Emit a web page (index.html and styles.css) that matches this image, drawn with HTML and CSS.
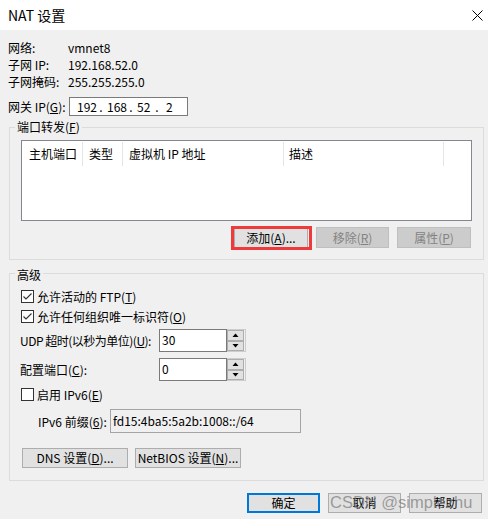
FILE: index.html
```html
<!DOCTYPE html>
<html lang="zh-CN">
<head>
<meta charset="utf-8">
<title>NAT 设置</title>
<link rel="stylesheet" href="styles.css">
</head>
<body>
<div class="titlebar">
  <span class="title">NAT 设置</span>
  <svg class="close" width="11" height="11" viewBox="0 0 11 11"><path d="M0.5 0.5L10.5 10.5M10.5 0.5L0.5 10.5" stroke="#000" stroke-width="1" fill="none"/></svg>
</div>
<div class="main">
  <div class="info-row"><span class="info-label">网络:</span><span>vmnet8</span></div>
  <div class="info-row"><span class="info-label">子网 IP:</span><span>192.168.52.0</span></div>
  <div class="info-row"><span class="info-label">子网掩码:</span><span>255.255.255.0</span></div>
  <div class="gw-row">
    <span class="gw-label">网关 IP(<u>G</u>):</span>
    <div class="ipbox"><span class="oct o1">192</span><span class="dot">.</span><span class="oct o2">168</span><span class="dot">.</span><span class="oct o3">52</span><span class="dot">.</span><span class="oct o4">2</span></div>
  </div>

  <fieldset class="group group-pf">
    <legend>端口转发(<u>F</u>)</legend>
    <div class="listview">
      <div class="lv-header">
        <div class="lv-col c1">主机端口</div>
        <div class="lv-col c2">类型</div>
        <div class="lv-col c3">虚拟机 IP 地址</div>
        <div class="lv-col c4">描述</div>
      </div>
    </div>
    <div class="btn-row">
      <span class="hl"><button class="btn w74">添加(<u>A</u>)...</button></span>
      <button class="btn btn-dis w73">移除(<u>R</u>)</button>
      <button class="btn btn-dis w74">属性(<u>P</u>)</button>
    </div>
  </fieldset>

  <fieldset class="group group-adv">
    <legend>高级</legend>
    <div class="cb-row">
      <svg class="cb" width="13" height="13" viewBox="0 0 13 13"><rect x="0.5" y="0.5" width="12" height="12" fill="#fff" stroke="#333"/><path d="M2.5 6.5L5 9L10.5 3.5" stroke="#333" stroke-width="1.1" fill="none"/></svg>
      <span>允许活动的 FTP(<u>T</u>)</span>
    </div>
    <div class="cb-row">
      <svg class="cb" width="13" height="13" viewBox="0 0 13 13"><rect x="0.5" y="0.5" width="12" height="12" fill="#fff" stroke="#333"/><path d="M2.5 6.5L5 9L10.5 3.5" stroke="#333" stroke-width="1.1" fill="none"/></svg>
      <span>允许任何组织唯一标识符(<u>O</u>)</span>
    </div>
    <div class="field-row">
      <span class="field-label tight">UDP 超时(以秒为单位)(<u>U</u>):</span>
      <div class="spin-input">30</div>
      <div class="spin">
        <div class="spin-btn"><svg width="7" height="4" viewBox="0 0 7 4"><path d="M0.5 4L3.5 0.5L6.5 4Z" fill="#000"/></svg></div>
        <div class="spin-btn"><svg width="7" height="4" viewBox="0 0 7 4"><path d="M0.5 0L3.5 3.5L6.5 0Z" fill="#000"/></svg></div>
      </div>
    </div>
    <div class="field-row row-gap">
      <span class="field-label">配置端口(<u>C</u>):</span>
      <div class="spin-input">0</div>
      <div class="spin">
        <div class="spin-btn"><svg width="7" height="4" viewBox="0 0 7 4"><path d="M0.5 4L3.5 0.5L6.5 4Z" fill="#000"/></svg></div>
        <div class="spin-btn"><svg width="7" height="4" viewBox="0 0 7 4"><path d="M0.5 0L3.5 3.5L6.5 0Z" fill="#000"/></svg></div>
      </div>
    </div>
    <div class="cb-row cb-ipv6">
      <svg class="cb" width="13" height="13" viewBox="0 0 13 13"><rect x="0.5" y="0.5" width="12" height="12" fill="#fff" stroke="#333"/></svg>
      <span>启用 IPv6(<u>E</u>)</span>
    </div>
    <div class="ipv6-row">
      <span class="ipv6-label">IPv6 前缀(<u>6</u>):</span>
      <div class="ipv6-input">fd15:4ba5:5a2b:1008::/64</div>
    </div>
    <div class="dns-row">
      <button class="btn btn-wide">DNS 设置(<u>D</u>)...</button>
      <button class="btn btn-wide">NetBIOS 设置(<u>N</u>)...</button>
    </div>
  </fieldset>

  <div class="footer">
    <button class="btn btn-foot btn-ok">确定</button>
    <button class="btn btn-foot">取消</button>
    <button class="btn btn-foot">帮助</button>
    <span class="watermark">CSDN @simplezhu</span>
  </div>
</div>
</body>
</html>
```

FILE: styles.css
```css
*, *::before, *::after { box-sizing: border-box; }
html, body { margin: 0; padding: 0; }
body {
  width: 488px;
  height: 519px;
  overflow: hidden;
  background: #f0f0f0;
  font-family: "Noto Sans CJK SC", "Microsoft YaHei", sans-serif;
  font-size: 12px;
  color: #000;
}
u { text-decoration: underline; text-underline-offset: 1px; }

.titlebar {
  height: 30px;
  background: #fff;
  display: flex;
  align-items: center;
  justify-content: space-between;
  padding: 0 5px 0 8px;
}
.title { font-size: 14px; }
.close { display: block; }

.main { padding: 9px 4px 0 8px; }

.info-row { display: flex; height: 17px; line-height: 17px; }
.info-label { width: 60px; flex: none; white-space: nowrap; }

.gw-row { display: flex; align-items: center; height: 19px; margin-top: 7px; }
.gw-label { width: 61px; flex: none; white-space: nowrap; }
.ipbox {
  width: 119px;
  height: 19px;
  border: 1px solid #7a7a7a;
  background: #fff;
  display: flex;
  align-items: center;
  padding-left: 7px;
  line-height: 17px;
}
.oct { flex: none; }
.o1, .o2 { width: 18px; }
.o3 { width: 14px; }
.o4 { padding-left: 3px; }
.dot { width: 12px; flex: none; text-align: center; }

.group {
  margin: 3px 0 0 1px;
  border: 1px solid #dcdcdc;
  padding: 5px 11px 11px 5px;
  min-width: 0;
}
.group legend { padding: 0 2px; line-height: 16px; }
.group-adv { margin-top: 4px; padding: 4px 11px 12px 5px; }
.group-adv legend { padding: 4px 2px 0; line-height: 14px; }

.listview {
  margin-left: 6px;
  height: 81px;
  border: 1px solid #828790;
  background: #fff;
}
.lv-header { display: flex; height: 25px; }
.lv-col {
  margin-top: 1px;
  height: 24px;
  line-height: 23px;
  border-right: 1px solid #e5e5e5;
  padding-left: 6px;
  white-space: nowrap;
}
.c1 { width: 61px; padding-left: 7px; }
.c2 { width: 40px; }
.c3 { width: 161px; }
.c4 { width: 160px; padding-left: 5px; }

.btn {
  font: inherit;
  color: #000;
  margin: 0;
  padding: 0;
  height: 21px;
  line-height: 19px;
  border: 1px solid #adadad;
  background: #e1e1e1;
  text-align: center;
  white-space: nowrap;
}
.btn-dis { background: #cccccc; border-color: #bfbfbf; color: #838383; }
.w73 { width: 73px; }
.w74 { width: 74px; }

.btn-row {
  display: flex;
  justify-content: flex-end;
  gap: 8px;
  margin-top: 6px;
  margin-right: 1px;
}
.hl { position: relative; display: flex; }
.hl::after {
  content: "";
  position: absolute;
  left: -3px;
  top: -1px;
  width: 81px;
  height: 24px;
  border: 3px solid #ee3a3a;
  pointer-events: none;
}

.cb-row {
  display: flex;
  align-items: center;
  gap: 3px;
  height: 20px;
  margin-left: 6px;
}
.cb { display: block; flex: none; }
.cb-ipv6 { margin-top: 3px; }

.field-row {
  display: flex;
  align-items: center;
  height: 23px;
  margin-top: 3px;
  margin-left: 5px;
}
.row-gap { margin-top: 6px; }
.field-label { width: 139px; flex: none; white-space: nowrap; }
.tight { letter-spacing: -0.5px; }
.spin-input {
  width: 68px;
  height: 23px;
  border: 1px solid #7a7a7a;
  background: #fff;
  padding: 0 0 0 2px;
  line-height: 19px;
}
.spin {
  width: 19px;
  height: 23px;
  border: 1px solid #cdcdcd;
  border-left: none;
  display: flex;
  flex-direction: column;
  padding: 0 1px 0 0;
}
.spin-btn {
  flex: 1;
  border: 1px solid #adadad;
  background: #e1e1e1;
  display: flex;
  align-items: center;
  justify-content: center;
}
.spin-btn svg { display: block; }

.ipv6-row {
  display: flex;
  align-items: center;
  height: 24px;
  margin-top: 5px;
  margin-left: 23px;
}
.ipv6-label { width: 72px; flex: none; white-space: nowrap; }
.ipv6-input {
  width: 191px;
  height: 24px;
  border: 1px solid #a5a5a5;
  background: #f0f0f0;
  padding-left: 2px;
  line-height: 22px;
}

.dns-row {
  display: flex;
  gap: 7px;
  margin-top: 15px;
  margin-left: 7px;
}
.btn-wide { width: 106px; height: 20px; line-height: 18px; }

.footer {
  position: relative;
  display: flex;
  justify-content: flex-end;
  gap: 8px;
  margin-top: 12px;
  margin-right: 2px;
}
.btn-foot { width: 73px; height: 20px; line-height: 18px; }
.btn-ok { border: 2px solid #0078d7; line-height: 16px; }
.watermark {
  position: absolute;
  left: 322px;
  top: 0px;
  font-family: "Liberation Sans", Arial, sans-serif;
  font-size: 16.5px;
  line-height: 18px;
  color: rgba(120, 120, 120, 0.7);
  white-space: nowrap;
  pointer-events: none;
}
```
